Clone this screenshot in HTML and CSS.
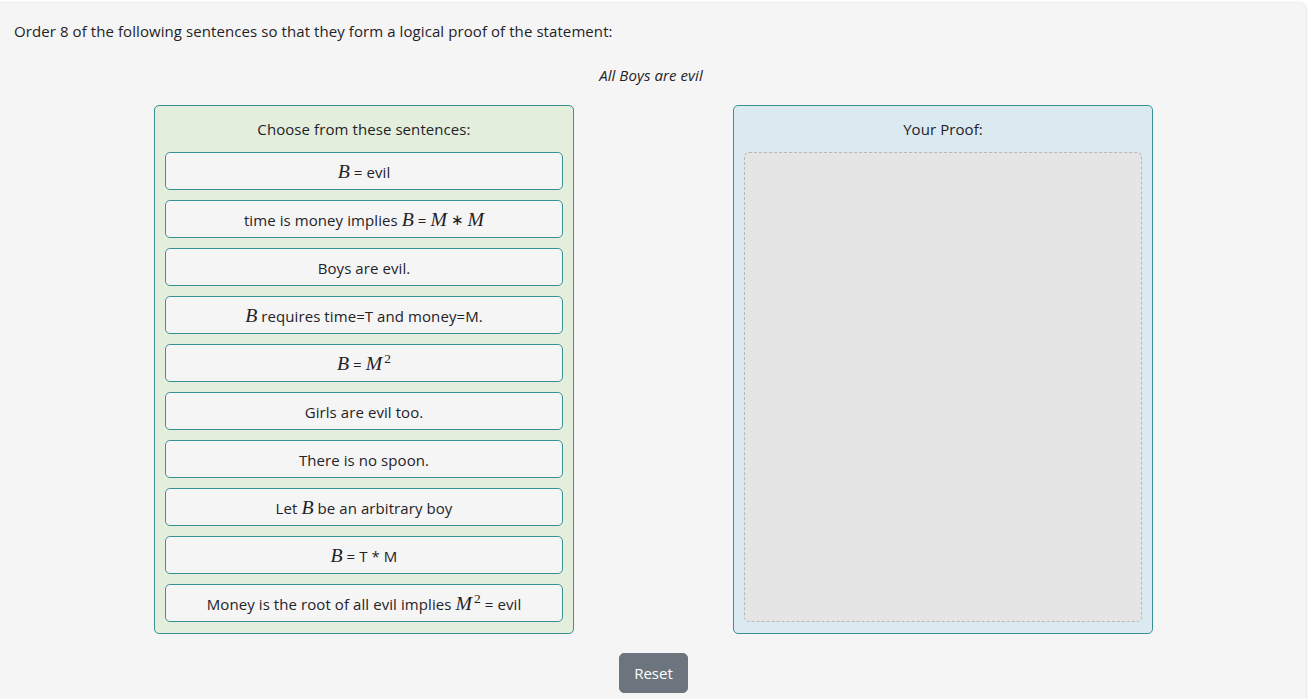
FILE: index.html
```html
<!DOCTYPE html>
<html lang="en">
<head>
<meta charset="utf-8">
<title>Proof ordering</title>
<link rel="stylesheet" href="styles.css">
</head>
<body>
<div class="card">
  <p class="prompt">Order 8 of the following sentences so that they form a logical proof of the statement:</p>
  <p class="statement">All Boys are evil</p>
  <div class="columns">
    <div class="panel panel-source">
      <div class="panel-title">Choose from these sentences:</div>
      <div class="items">
        <div class="item"><span class="m">B</span> = evil</div>
        <div class="item">time is money implies <span class="m">B</span> = <span class="m">M</span><span class="op">∗</span><span class="m">M</span></div>
        <div class="item">Boys are evil.</div>
        <div class="item"><span class="m">B</span> requires time=T and money=M.</div>
        <div class="item"><span class="m">B</span> = <span class="m">M</span><span class="sup">2</span></div>
        <div class="item">Girls are evil too.</div>
        <div class="item">There is no spoon.</div>
        <div class="item">Let <span class="m">B</span> be an arbitrary boy</div>
        <div class="item"><span class="m">B</span> = T * M</div>
        <div class="item">Money is the root of all evil implies <span class="m">M</span><span class="sup">2</span> = evil</div>
      </div>
    </div>
    <div class="panel panel-proof">
      <div class="panel-title">Your Proof:</div>
      <div class="dropzone"></div>
    </div>
  </div>
  <div class="actions">
    <button class="btn-reset" type="button">Reset</button>
  </div>
</div>
</body>
</html>
```

FILE: styles.css
```css
html, body {
  margin: 0;
  padding: 0;
  background: #ffffff;
}
body {
  font-family: "Open Sans", "Noto Sans", sans-serif;
  font-size: 15px;
  letter-spacing: 0.08px;
  color: #1f2328;
}
.card {
  margin: 3px 3px 0 -4px;
  padding: 16px 0 20px 18px;
  background: #f5f5f5;
  border-radius: 6px;
  box-shadow: 0 0 3px rgba(0, 0, 0, 0.18);
  min-height: 720px;
  box-sizing: border-box;
}
.prompt {
  margin: 0;
  line-height: 24px;
}
.statement {
  margin: 20px 0 0 0;
  line-height: 24px;
  text-align: center;
  font-style: italic;
  padding-right: 18px;
}
.columns {
  margin-top: 18px;
  display: flex;
  justify-content: center;
  gap: 159px;
  padding-right: 13px;
}
.panel {
  width: 420px;
  box-sizing: border-box;
  border: 1px solid #3a9191;
  border-radius: 5px;
  padding: 11px 10px 10px 10px;
  height: 529px;
}
.panel-source {
  background: #e3efdc;
}
.panel-proof {
  background: #dbe9f0;
}
.panel-title {
  text-align: center;
  line-height: 24px;
  margin-bottom: 11px;
}
.items {
  display: flex;
  flex-direction: column;
  gap: 10px;
}
.item {
  height: 38px;
  box-sizing: border-box;
  border: 1px solid #3a9191;
  border-radius: 5px;
  background: #f5f5f5;
  display: flex;
  align-items: center;
  justify-content: center;
  white-space: pre;
  line-height: 24px;
  padding-top: 2px;
}
.m {
  font-family: "Liberation Serif", "DejaVu Serif", serif;
  font-style: italic;
  font-size: 1.32em;
  line-height: 1;
  letter-spacing: 0;
}
.op {
  font-family: "DejaVu Sans", sans-serif;
  font-size: 1em;
  padding: 0 4px;
}
.sup {
  display: inline-block;
  font-family: "Liberation Serif", serif;
  font-size: 0.9em;
  line-height: 1;
  align-self: flex-start;
  margin-top: 5px;
  margin-left: 2px;
}
.dropzone {
  height: 470px;
  box-sizing: border-box;
  background: #e5e5e5;
  border: 1px dashed #b8b8b8;
  border-radius: 5px;
}
.actions {
  display: flex;
  justify-content: center;
  margin-top: 19px;
  padding-right: 13px;
}
.btn-reset {
  font-family: inherit;
  font-size: 15px;
  color: #ffffff;
  background: #6c757d;
  border: 1px solid #6c757d;
  border-radius: 5px;
  width: 69px;
  height: 40px;
  padding: 0 0 0 0;
  cursor: pointer;
}
```
